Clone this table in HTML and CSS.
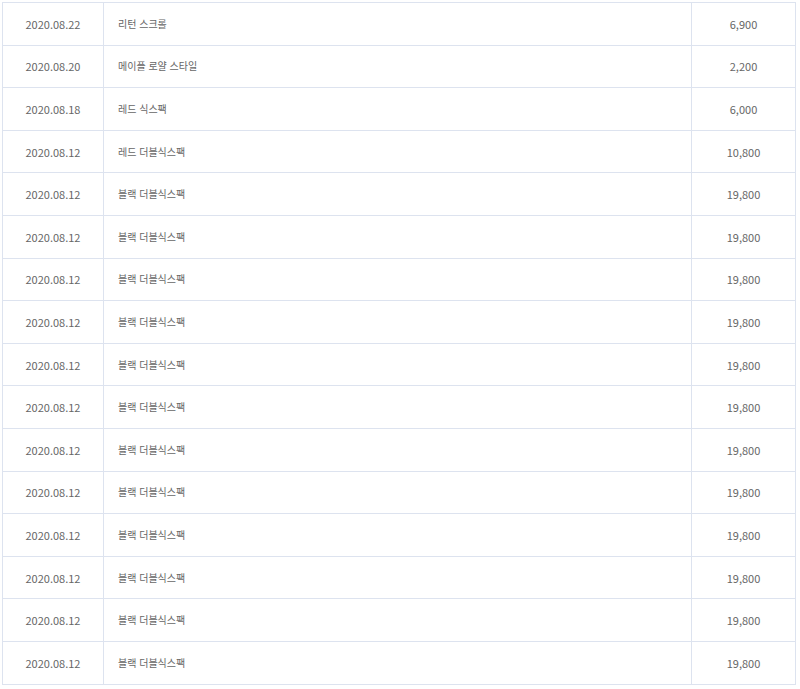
FILE: index.html
```html
<!DOCTYPE html>
<html lang="ko">
<head>
<meta charset="utf-8">
<link rel="stylesheet" href="styles.css">
</head>
<body>
<table class="history">
<colgroup><col class="c-date"><col class="c-name"><col class="c-price"></colgroup>
<tbody>
<tr><td class="date">2020.08.22</td><td class="name">리턴 스크롤</td><td class="price">6,900</td></tr>
<tr><td class="date">2020.08.20</td><td class="name">메이플 로얄 스타일</td><td class="price">2,200</td></tr>
<tr><td class="date">2020.08.18</td><td class="name">레드 식스팩</td><td class="price">6,000</td></tr>
<tr><td class="date">2020.08.12</td><td class="name">레드 더블식스팩</td><td class="price">10,800</td></tr>
<tr><td class="date">2020.08.12</td><td class="name">블랙 더블식스팩</td><td class="price">19,800</td></tr>
<tr><td class="date">2020.08.12</td><td class="name">블랙 더블식스팩</td><td class="price">19,800</td></tr>
<tr><td class="date">2020.08.12</td><td class="name">블랙 더블식스팩</td><td class="price">19,800</td></tr>
<tr><td class="date">2020.08.12</td><td class="name">블랙 더블식스팩</td><td class="price">19,800</td></tr>
<tr><td class="date">2020.08.12</td><td class="name">블랙 더블식스팩</td><td class="price">19,800</td></tr>
<tr><td class="date">2020.08.12</td><td class="name">블랙 더블식스팩</td><td class="price">19,800</td></tr>
<tr><td class="date">2020.08.12</td><td class="name">블랙 더블식스팩</td><td class="price">19,800</td></tr>
<tr><td class="date">2020.08.12</td><td class="name">블랙 더블식스팩</td><td class="price">19,800</td></tr>
<tr><td class="date">2020.08.12</td><td class="name">블랙 더블식스팩</td><td class="price">19,800</td></tr>
<tr><td class="date">2020.08.12</td><td class="name">블랙 더블식스팩</td><td class="price">19,800</td></tr>
<tr><td class="date">2020.08.12</td><td class="name">블랙 더블식스팩</td><td class="price">19,800</td></tr>
<tr><td class="date">2020.08.12</td><td class="name">블랙 더블식스팩</td><td class="price">19,800</td></tr>
</tbody>
</table>
</body>
</html>
```
FILE: styles.css
```css
html, body {
  margin: 0;
  padding: 0;
  background: #fff;
}
body {
  padding: 2px 0 0 2px;
  font-family: "Noto Sans CJK KR", "Noto Sans", sans-serif;
  font-size: 11px;
  color: #666;
}
.history {
  width: 794px;
  border-collapse: collapse;
  table-layout: fixed;
}
.c-date { width: 101px; }
.c-price { width: 104px; }
.history td {
  border: 1px solid #dde3ef;
  height: 41.6px;
  padding: 0;
  vertical-align: middle;
  line-height: 16px;
}
.date, .price { text-align: center; }
.history .name {
  padding-left: 14px;
  font-size: 10px;
}
```
